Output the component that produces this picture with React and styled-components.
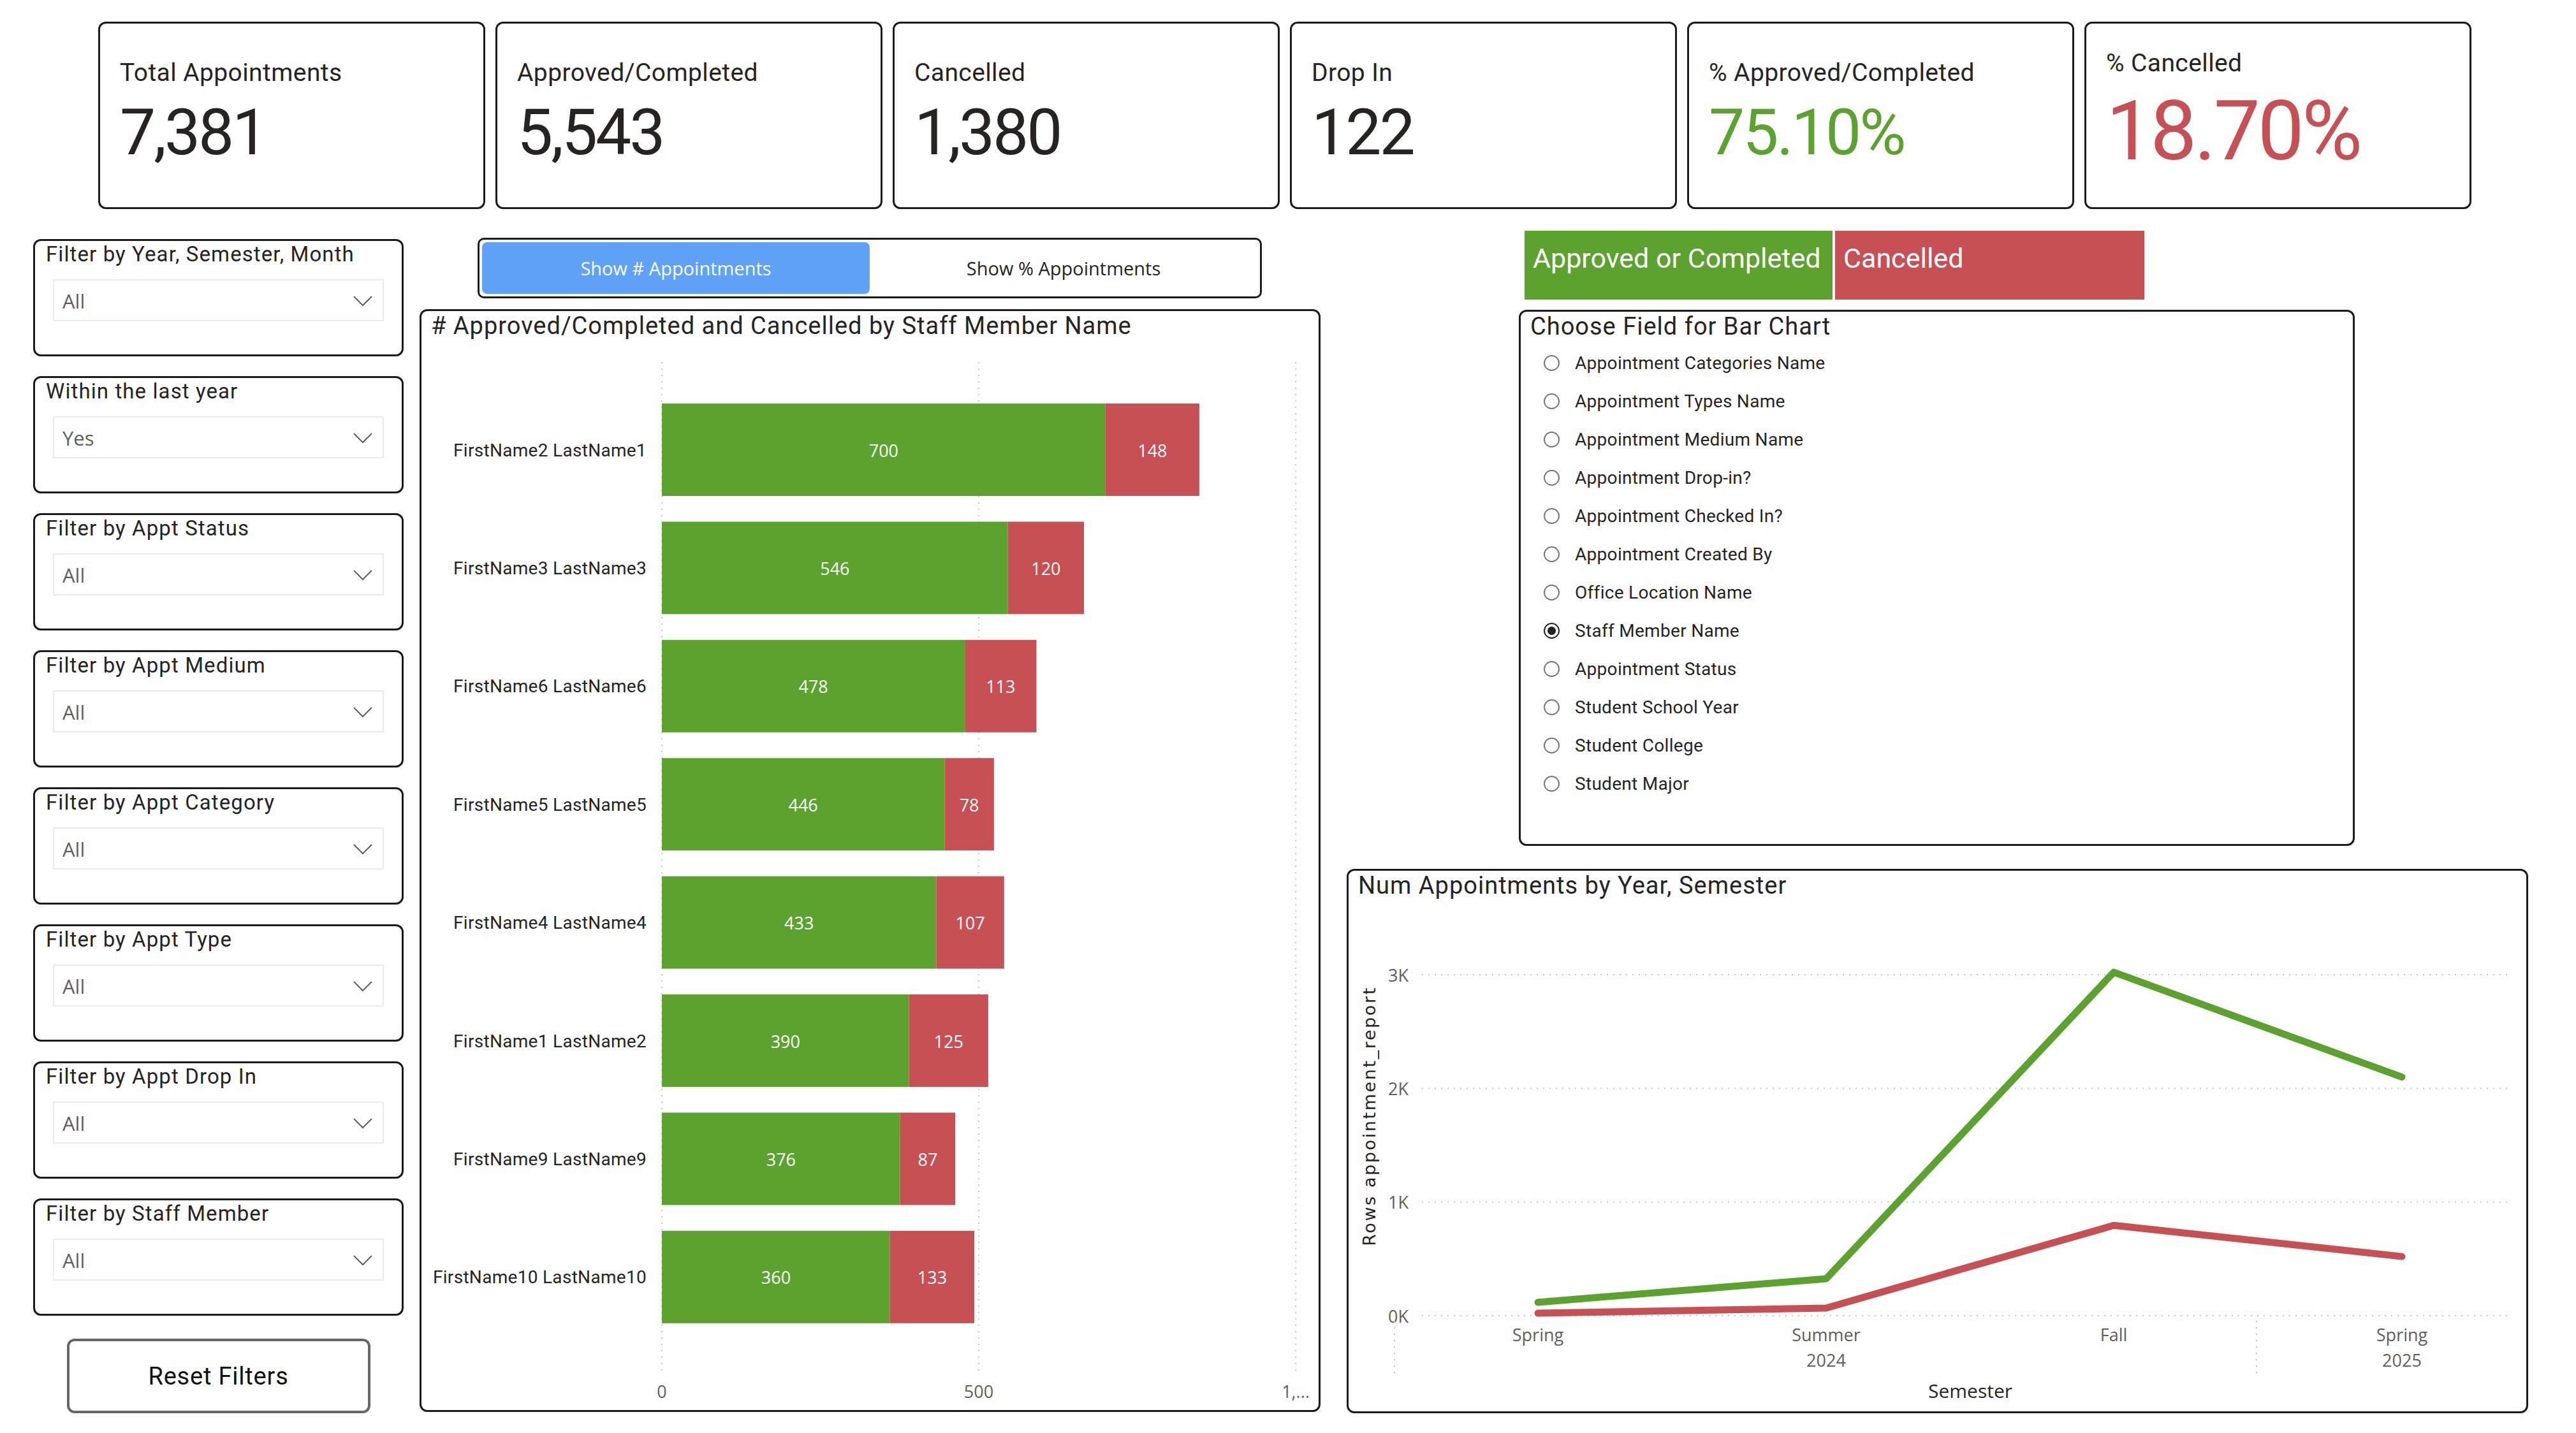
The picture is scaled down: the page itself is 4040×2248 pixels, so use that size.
import React from 'react';
import styled, { createGlobalStyle } from 'styled-components';

const GREEN = '#5ba22f';
const RED = '#c75055';
const INK = '#252423';

const GlobalStyle = createGlobalStyle`
    body {
        margin: 0;
        background: #ffffff;
        font-family: Roboto, "Liberation Sans", sans-serif;
        color: ${INK};
    }
    * { box-sizing: border-box; }
`;

const Page = styled.div`
    width: 4040px;
    height: 2248px;
    overflow: hidden;
    background: #ffffff;
    `;

const CardRow = styled.div`
    display: flex;
    gap: 16px;
    padding: 34px 0 0 154px;
    `;

const Card = styled.div`
    width: 607px;
    height: 294px;
    border: 3px solid #1b1b1b;
    border-radius: 12px;
    padding: ${p => (p.$big ? 39 : 54)}px 31px 0;
    display: flex;
    flex-direction: column;
    `;

const CardTitle = styled.div`
    font-size: 39px;
    line-height: 47px;
    letter-spacing: 0.4px;
    white-space: nowrap;
    `;

const CardValue = styled.div`
    font-size: ${p => (p.$big ? 130 : 100)}px;
    line-height: 1.1;
    margin-top: ${p => (p.$big ? 11 : 15)}px;
    letter-spacing: -0.03em;
    color: ${p => p.$color || INK};
    `;

const Main = styled.div`
    display: flex;
    align-items: flex-start;
    margin-top: 34px;
    `;

const LeftCol = styled.div`
    margin-left: 52px;
    width: 581px;
    padding-top: 13px;
    display: flex;
    flex-direction: column;
    `;

const FilterList = styled.div`
    display: flex;
    flex-direction: column;
    gap: 31px;
    `;

const FilterBox = styled.div`
    height: 184px;
    border: 3px solid #1b1b1b;
    border-radius: 12px;
    padding: 1px 28px 0 17px;
    `;

const FilterTitle = styled.div`
    font-size: 33px;
    line-height: 39px;
    letter-spacing: 1.1px;
    white-space: nowrap;
    `;

const Dropdown = styled.div`
    margin: 20px 0 0 11px;
    height: 66px;
    border: 2px solid #ebebeb;
    display: flex;
    align-items: center;
    justify-content: space-between;
    padding: 2px 16px 0 13px;
    font-family: "Open Sans", sans-serif;
    font-size: 31px;
    color: #605e5c;
    `;

const ResetButton = styled.div`
    margin-top: 36px;
    align-self: center;
    width: 476px;
    height: 117px;
    border: 4px solid #666666;
    border-radius: 12px;
    display: flex;
    align-items: center;
    justify-content: center;
    font-size: 38px;
    letter-spacing: 0.8px;
    color: #111111;
    `;

const MiddleCol = styled.div`
    margin-left: 25px;
    width: 1413px;
    padding-top: 11px;
    display: flex;
    flex-direction: column;
    `;

const Toggle = styled.div`
    margin-left: 91px;
    width: 1230px;
    height: 95px;
    border: 3px solid #1b1b1b;
    border-radius: 10px;
    padding: 4px;
    display: flex;
    `;

const ToggleOption = styled.div`
    flex: 1;
    border-radius: 8px;
    background: ${p => (p.$active ? '#5fa2f8' : 'transparent')};
    color: ${p => (p.$active ? '#ffffff' : INK)};
    display: flex;
    align-items: center;
    justify-content: center;
    font-family: "Open Sans", sans-serif;
    font-size: 29px;
    `;

const Panel = styled.div`
    height: ${p => p.$h}px;
    margin-top: ${p => p.$mt || 0}px;
    margin-left: ${p => p.$ml || 0}px;
    width: ${p => (p.$w ? p.$w + 'px' : 'auto')};
    border: 3px solid #1b1b1b;
    border-radius: 12px;
    display: flex;
    flex-direction: column;
    overflow: hidden;
    `;

const PanelTitle = styled.div`
    font-size: 38px;
    line-height: 46px;
    letter-spacing: 1px;
    padding-left: 15px;
    white-space: nowrap;
    `;

const ChartSvg = styled.svg`
    display: block;
    text {
        font-family: "Open Sans", sans-serif;
    }
    .cat {
        font-family: Roboto, sans-serif;
        font-size: 28px;
        letter-spacing: 0.3px;
        fill: ${INK};
    }
    .val {
        font-size: 27px;
        fill: #ffffff;
    }
    .axis {
        font-size: 27px;
        fill: #605e5c;
    }
    .grid {
        stroke: #c8c6c4;
        stroke-width: 2;
        stroke-dasharray: 2 8;
    }
    `;

const RightCol = styled.div`
    margin-left: 41px;
    width: 1853px;
    display: flex;
    flex-direction: column;
    `;

const Legend = styled.div`
    margin-left: 279px;
    display: flex;
    gap: 4px;
    `;

const LegendChip = styled.div`
    width: ${p => p.$w}px;
    height: 108px;
    background: ${p => p.$color};
    color: #ffffff;
    font-size: 43px;
    line-height: 52px;
    padding: 17px 13px 0;
    white-space: nowrap;
    `;

const RadioList = styled.div`
    margin-top: 4px;
    display: flex;
    flex-direction: column;
    `;

const RadioRow = styled.div`
    height: 60px;
    display: flex;
    align-items: center;
    gap: 24px;
    padding-left: 36px;
    font-size: 28px;
    letter-spacing: 0.3px;
    `;

const RadioCircle = styled.span`
    width: 25px;
    height: 25px;
    border-radius: 50%;
    border: 2px solid ${p => (p.$checked ? INK : '#777777')};
    background: ${p => (p.$checked ? `radial-gradient(circle, ${INK} 0 6px, #ffffff 7px)` : '#ffffff')};
    flex: none;
    `;

const cards = [
    { title: 'Total Appointments', value: '7,381' },
    { title: 'Approved/Completed', value: '5,543' },
    { title: 'Cancelled', value: '1,380' },
    { title: 'Drop In', value: '122' },
    { title: '% Approved/Completed', value: '75.10%', color: GREEN },
    { title: '% Cancelled', value: '18.70%', color: RED, big: true },
];

const filters = [
    ['Filter by Year, Semester, Month', 'All'],
    ['Within the last year', 'Yes'],
    ['Filter by Appt Status', 'All'],
    ['Filter by Appt Medium', 'All'],
    ['Filter by Appt Category', 'All'],
    ['Filter by Appt Type', 'All'],
    ['Filter by Appt Drop In', 'All'],
    ['Filter by Staff Member', 'All'],
];

const staff = [
    ['FirstName2 LastName1', 700, 148],
    ['FirstName3 LastName3', 546, 120],
    ['FirstName6 LastName6', 478, 113],
    ['FirstName5 LastName5', 446, 78],
    ['FirstName4 LastName4', 433, 107],
    ['FirstName1 LastName2', 390, 125],
    ['FirstName9 LastName9', 376, 87],
    ['FirstName10 LastName10', 360, 133],
];

const fields = [
    'Appointment Categories Name',
    'Appointment Types Name',
    'Appointment Medium Name',
    'Appointment Drop-in?',
    'Appointment Checked In?',
    'Appointment Created By',
    'Office Location Name',
    'Staff Member Name',
    'Appointment Status',
    'Student School Year',
    'Student College',
    'Student Major',
];

// semester points: [label, year label, approved, cancelled]
const semesters = [
    ['Spring', '', 118, 22],
    ['Summer', '2024', 325, 67],
    ['Fall', '', 3022, 795],
    ['Spring', '2025', 2100, 521],
];

const Chevron = () => (
    <svg width="30" height="17" viewBox="0 0 30 17">
        <polyline points="1,1 15,15 29,1" fill="none" stroke="#605e5c" strokeWidth="2" />
    </svg>
);

function BarChart() {
    const x0 = 377;
    const k = 0.994;
    return (
        <ChartSvg width="1407" height="1678" viewBox="0 0 1407 1678">
            {[0, 500, 1000].map(v => (
                <line key={v} className="grid" x1={x0 + v * k} x2={x0 + v * k} y1="34" y2="1620" />
            ))}
            {staff.map(([name, ok, cx], i) => {
                const y = 99 + i * 185.4;
                const wOk = ok * k;
                const wCx = cx * k;
                return (
                    <g key={name}>
                        <text className="cat" x="353" y={y + 73} textAnchor="end" dominantBaseline="central">{name}</text>
                        <rect x={x0} y={y} width={wOk} height="145" fill={GREEN} />
                        <rect x={x0 + wOk} y={y} width={wCx} height="145" fill={RED} />
                        <text className="val" x={x0 + wOk / 2} y={y + 73} textAnchor="middle" dominantBaseline="central">{ok}</text>
                        <text className="val" x={x0 + wOk + wCx / 2} y={y + 73} textAnchor="middle" dominantBaseline="central">{cx}</text>
                    </g>
                );
            })}
            <text className="axis" x={x0} y="1648" textAnchor="middle" dominantBaseline="central">0</text>
            <text className="axis" x={x0 + 500 * k} y="1648" textAnchor="middle" dominantBaseline="central">500</text>
            <text className="axis" x={x0 + 1000 * k} y="1648" textAnchor="middle" dominantBaseline="central">1,...</text>
        </ChartSvg>
    );
}

function LineChart() {
    const xs = [297, 749, 1200, 1652];
    const yOf = v => 652 - v * 0.1783;
    const pts = idx => semesters.map((s, i) => `${xs[i]},${yOf(s[idx])}`).join(' ');
    return (
        <ChartSvg width="1847" height="802" viewBox="0 0 1847 802">
            {[3, 2, 1, 0].map(t => (
                <g key={t}>
                    <line className="grid" x1="115" x2="1823" y1={yOf(t * 1000)} y2={yOf(t * 1000)} />
                    <text className="axis" x="94" y={yOf(t * 1000)} textAnchor="end" dominantBaseline="central">{t}K</text>
                </g>
            ))}
            <line className="grid" x1="72" x2="72" y1="660" y2="748" />
            <line className="grid" x1="1424" x2="1424" y1="660" y2="748" />
            <polyline points={pts(2)} fill="none" stroke={GREEN} strokeWidth="11" strokeLinejoin="round" strokeLinecap="round" />
            <polyline points={pts(3)} fill="none" stroke={RED} strokeWidth="11" strokeLinejoin="round" strokeLinecap="round" />
            {semesters.map(([label, year], i) => (
                <g key={i}>
                    <text className="axis" x={xs[i]} y="681" textAnchor="middle" dominantBaseline="central">{label}</text>
                    {year && <text className="axis" x={xs[i]} y="721" textAnchor="middle" dominantBaseline="central">{year}</text>}
                </g>
            ))}
            <text x="975" y="769" textAnchor="middle" dominantBaseline="central" fontSize="30" fill="#252423">Semester</text>
            <text
                x="32" y="339"
                transform="rotate(-90 32 339)"
                textAnchor="middle"
                dominantBaseline="central"
                fontSize="27"
                fill="#252423"
                letterSpacing="2.6"
                style={{ fontFamily: '"DejaVu Sans", sans-serif' }}
            >
                Rows appointment_report
            </text>
        </ChartSvg>
    );
}

export default function App() {
    return (
        <Page>
            <GlobalStyle />
            <CardRow>
                {cards.map(c => (
                    <Card key={c.title} $big={c.big}>
                        <CardTitle>{c.title}</CardTitle>
                        <CardValue $big={c.big} $color={c.color}>{c.value}</CardValue>
                    </Card>
                ))}
            </CardRow>
            <Main>
                <LeftCol>
                    <FilterList>
                        {filters.map(([title, value]) => (
                            <FilterBox key={title}>
                                <FilterTitle>{title}</FilterTitle>
                                <Dropdown>
                                    <span>{value}</span>
                                    <Chevron />
                                </Dropdown>
                            </FilterBox>
                        ))}
                    </FilterList>
                    <ResetButton>Reset Filters</ResetButton>
                </LeftCol>
                <MiddleCol>
                    <Toggle>
                        <ToggleOption $active>Show # Appointments</ToggleOption>
                        <ToggleOption>Show % Appointments</ToggleOption>
                    </Toggle>
                    <Panel $h={1730} $mt={17}>
                        <PanelTitle># Approved/Completed and Cancelled by Staff Member Name</PanelTitle>
                        <BarChart />
                    </Panel>
                </MiddleCol>
                <RightCol>
                    <Legend>
                        <LegendChip $w={483} $color={GREEN}>Approved or Completed</LegendChip>
                        <LegendChip $w={485} $color={RED}>Cancelled</LegendChip>
                    </Legend>
                    <Panel $h={841} $mt={16} $ml={270} $w={1311}>
                        <PanelTitle>Choose Field for Bar Chart</PanelTitle>
                        <RadioList>
                            {fields.map(f => (
                                <RadioRow key={f}>
                                    <RadioCircle $checked={f === 'Staff Member Name'} />
                                    {f}
                                </RadioRow>
                            ))}
                        </RadioList>
                    </Panel>
                    <Panel $h={854} $mt={36}>
                        <PanelTitle>Num Appointments by Year, Semester</PanelTitle>
                        <LineChart />
                    </Panel>
                </RightCol>
            </Main>
        </Page>
    );
}
